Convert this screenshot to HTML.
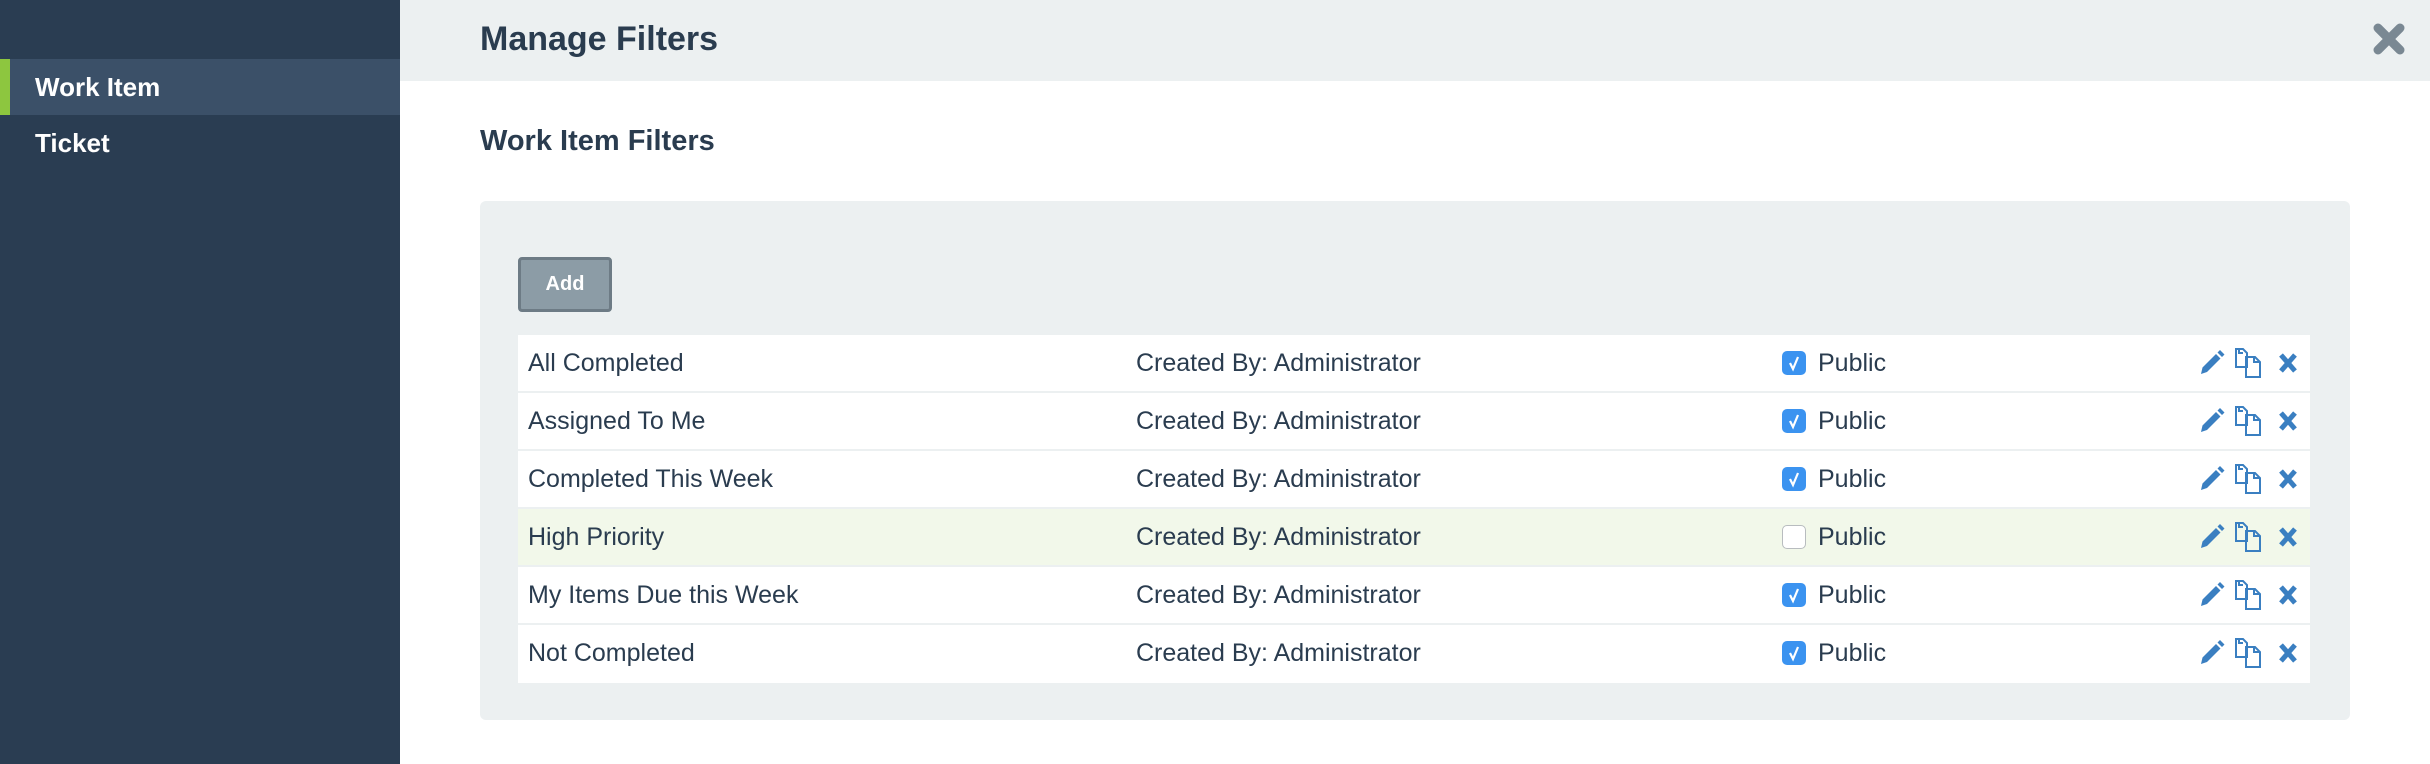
<!DOCTYPE html>
<html><head><style>
*{margin:0;padding:0;box-sizing:border-box}
body{width:2430px;height:764px;position:relative;background:#fff;font-family:"Liberation Sans",sans-serif;color:#2a3c4f;overflow:hidden}
#side{position:absolute;left:0;top:0;width:400px;height:764px;background:#2a3d52}
.si{position:absolute;left:0;width:400px;height:56px;font-weight:bold;font-size:26px;color:#fff;padding-left:35px;line-height:56px}
.act{top:59px;background:#3b5068;border-left:10px solid #8dc63f;padding-left:25px}
#hdr{position:absolute;left:400px;top:0;width:2030px;height:81px;background:#ecf0f1}
h1{position:absolute;left:480px;top:20px;font-size:34px;font-weight:bold}
h2{position:absolute;left:480px;top:125px;font-size:29px;font-weight:bold}
#close{position:absolute;left:2372px;top:22px}
#panel{position:absolute;left:480px;top:201px;width:1870px;height:519px;background:#ecf0f1;border-radius:6px}
#add{position:absolute;left:518px;top:257px;width:94px;height:55px;background:#8c9ca6;border:3px solid #6d7b85;border-radius:4px;color:#fff;font-weight:bold;font-size:20px;text-align:center;line-height:49px}
.row{position:absolute;left:518px;width:1792px;height:56px;background:#fff;font-size:25px;line-height:56px}
.row.hl{background:#f2f8ea}
.row span{position:absolute;top:0}
.c1{left:10px}.c2{left:618px}.c4{left:1300px}
.cb{position:absolute;left:1264px;top:16px;width:24px;height:24px;border-radius:5px;background:#3b93f0;overflow:hidden}
.cb svg{display:block}
.cb.off{background:#fff;border:1px solid #b8bcbf}
.ic{position:absolute;top:14px}
</style></head><body>
<div id="side">
<div class="si act">Work Item</div>
<div class="si" style="top:115px">Ticket</div>
</div>
<div id="hdr"></div>
<h1>Manage Filters</h1>
<svg id="close" width="34" height="34" viewBox="0 0 34 34"><path d="M6 6L28 28M28 6L6 28" stroke="#7a8893" stroke-width="9" stroke-linecap="round"/></svg>
<h2>Work Item Filters</h2>
<div id="panel"></div>
<div id="add">Add</div>

<div class="row" style="top:335px"><span class="c1">All Completed</span><span class="c2">Created By: Administrator</span><div class="cb"><svg width="24" height="24"><path d="M8 12l3 6L16 6" stroke="#fff" stroke-width="2.2" fill="none"/></svg></div><span class="c4">Public</span>
<svg class="ic" style="left:1681px" width="26" height="26" viewBox="0 0 26 26"><path d="M2 25l1.5-6.5L17 5l4.5 4.5L8 23z M18.5 3.5l2.5-2.5 4.5 4.5-2.5 2.5z" fill="#3a7fc1"/></svg>
<svg class="ic" style="left:1716px;top:12px" width="30" height="32" viewBox="0 0 30 32"><path d="M2 2h7l4 4v14H2zM5 2v4h4M12 10h9l5 5v15H12zM20 10v5h6" fill="none" stroke="#3a7fc1" stroke-width="2"/></svg>
<svg class="ic" style="left:1760px;top:17px" width="20" height="22" viewBox="0 0 20 22"><path d="M3 3l14 16M17 3L3 19" stroke="#3a7fc1" stroke-width="5"/></svg></div>

<div class="row" style="top:393px"><span class="c1">Assigned To Me</span><span class="c2">Created By: Administrator</span><div class="cb"><svg width="24" height="24"><path d="M8 12l3 6L16 6" stroke="#fff" stroke-width="2.2" fill="none"/></svg></div><span class="c4">Public</span>
<svg class="ic" style="left:1681px" width="26" height="26" viewBox="0 0 26 26"><path d="M2 25l1.5-6.5L17 5l4.5 4.5L8 23z M18.5 3.5l2.5-2.5 4.5 4.5-2.5 2.5z" fill="#3a7fc1"/></svg>
<svg class="ic" style="left:1716px;top:12px" width="30" height="32" viewBox="0 0 30 32"><path d="M2 2h7l4 4v14H2zM5 2v4h4M12 10h9l5 5v15H12zM20 10v5h6" fill="none" stroke="#3a7fc1" stroke-width="2"/></svg>
<svg class="ic" style="left:1760px;top:17px" width="20" height="22" viewBox="0 0 20 22"><path d="M3 3l14 16M17 3L3 19" stroke="#3a7fc1" stroke-width="5"/></svg></div>

<div class="row" style="top:451px"><span class="c1">Completed This Week</span><span class="c2">Created By: Administrator</span><div class="cb"><svg width="24" height="24"><path d="M8 12l3 6L16 6" stroke="#fff" stroke-width="2.2" fill="none"/></svg></div><span class="c4">Public</span>
<svg class="ic" style="left:1681px" width="26" height="26" viewBox="0 0 26 26"><path d="M2 25l1.5-6.5L17 5l4.5 4.5L8 23z M18.5 3.5l2.5-2.5 4.5 4.5-2.5 2.5z" fill="#3a7fc1"/></svg>
<svg class="ic" style="left:1716px;top:12px" width="30" height="32" viewBox="0 0 30 32"><path d="M2 2h7l4 4v14H2zM5 2v4h4M12 10h9l5 5v15H12zM20 10v5h6" fill="none" stroke="#3a7fc1" stroke-width="2"/></svg>
<svg class="ic" style="left:1760px;top:17px" width="20" height="22" viewBox="0 0 20 22"><path d="M3 3l14 16M17 3L3 19" stroke="#3a7fc1" stroke-width="5"/></svg></div>

<div class="row hl" style="top:509px"><span class="c1">High Priority</span><span class="c2">Created By: Administrator</span><div class="cb off"></div><span class="c4">Public</span>
<svg class="ic" style="left:1681px" width="26" height="26" viewBox="0 0 26 26"><path d="M2 25l1.5-6.5L17 5l4.5 4.5L8 23z M18.5 3.5l2.5-2.5 4.5 4.5-2.5 2.5z" fill="#3a7fc1"/></svg>
<svg class="ic" style="left:1716px;top:12px" width="30" height="32" viewBox="0 0 30 32"><path d="M2 2h7l4 4v14H2zM5 2v4h4M12 10h9l5 5v15H12zM20 10v5h6" fill="none" stroke="#3a7fc1" stroke-width="2"/></svg>
<svg class="ic" style="left:1760px;top:17px" width="20" height="22" viewBox="0 0 20 22"><path d="M3 3l14 16M17 3L3 19" stroke="#3a7fc1" stroke-width="5"/></svg></div>

<div class="row" style="top:567px"><span class="c1">My Items Due this Week</span><span class="c2">Created By: Administrator</span><div class="cb"><svg width="24" height="24"><path d="M8 12l3 6L16 6" stroke="#fff" stroke-width="2.2" fill="none"/></svg></div><span class="c4">Public</span>
<svg class="ic" style="left:1681px" width="26" height="26" viewBox="0 0 26 26"><path d="M2 25l1.5-6.5L17 5l4.5 4.5L8 23z M18.5 3.5l2.5-2.5 4.5 4.5-2.5 2.5z" fill="#3a7fc1"/></svg>
<svg class="ic" style="left:1716px;top:12px" width="30" height="32" viewBox="0 0 30 32"><path d="M2 2h7l4 4v14H2zM5 2v4h4M12 10h9l5 5v15H12zM20 10v5h6" fill="none" stroke="#3a7fc1" stroke-width="2"/></svg>
<svg class="ic" style="left:1760px;top:17px" width="20" height="22" viewBox="0 0 20 22"><path d="M3 3l14 16M17 3L3 19" stroke="#3a7fc1" stroke-width="5"/></svg></div>

<div class="row" style="top:625px;height:58px"><span class="c1">Not Completed</span><span class="c2">Created By: Administrator</span><div class="cb"><svg width="24" height="24"><path d="M8 12l3 6L16 6" stroke="#fff" stroke-width="2.2" fill="none"/></svg></div><span class="c4">Public</span>
<svg class="ic" style="left:1681px" width="26" height="26" viewBox="0 0 26 26"><path d="M2 25l1.5-6.5L17 5l4.5 4.5L8 23z M18.5 3.5l2.5-2.5 4.5 4.5-2.5 2.5z" fill="#3a7fc1"/></svg>
<svg class="ic" style="left:1716px;top:12px" width="30" height="32" viewBox="0 0 30 32"><path d="M2 2h7l4 4v14H2zM5 2v4h4M12 10h9l5 5v15H12zM20 10v5h6" fill="none" stroke="#3a7fc1" stroke-width="2"/></svg>
<svg class="ic" style="left:1760px;top:17px" width="20" height="22" viewBox="0 0 20 22"><path d="M3 3l14 16M17 3L3 19" stroke="#3a7fc1" stroke-width="5"/></svg></div>
</body></html>
